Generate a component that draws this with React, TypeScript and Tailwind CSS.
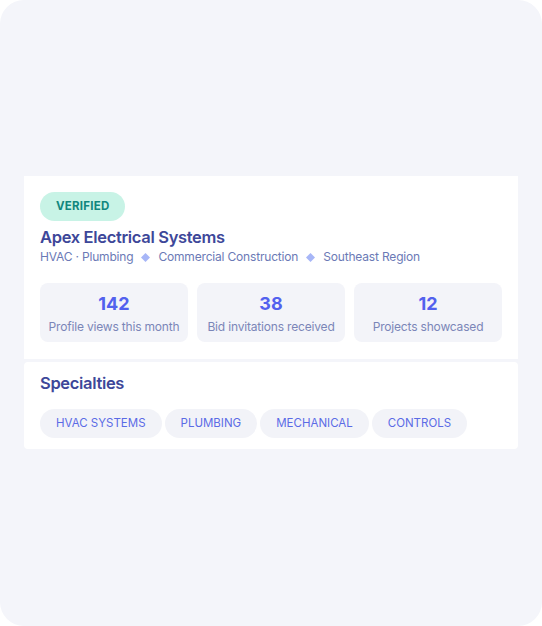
import React from 'react';

const stats = [
  { value: '142', label: 'Profile views this month' },
  { value: '38', label: 'Bid invitations received' },
  { value: '12', label: 'Projects showcased' },
];

const specialties = ['HVAC Systems', 'Plumbing', 'Mechanical', 'Controls'];

const Diamond = () => (
  <svg width="9" height="9" viewBox="0 0 10 10" className="mx-[8px] inline-block">
    <path d="M5 0 L10 5 L5 10 L0 5 Z" fill="#a7b6f7" />
  </svg>
);

export default function App() {
  return (
    <div className="min-h-screen bg-white font-['Inter',sans-serif]">
      <div className="h-[626px] w-[542px] rounded-[24px] bg-[#f4f5fa] flex flex-col justify-center px-[24px] pb-[1px]">
        <div className="bg-white px-[16px] pt-[16px] pb-[17px]">
          <span className="inline-flex h-[29px] items-center rounded-full bg-[#c8f3e6] px-[16px] text-[11.5px] font-bold tracking-[0.02em] text-[#12877e]">
            VERIFIED
          </span>
          <h2 className="mt-[5px] text-[16.5px] font-semibold leading-[22px] text-[#3d4799] tracking-[-0.02em]">
            Apex Electrical Systems
          </h2>
          <div className="mt-[0px] flex items-center text-[12px] leading-[18px] tracking-[-0.015em] text-[#6b7ab6]">
            <span>HVAC · Plumbing</span>
            <Diamond />
            <span>Commercial Construction</span>
            <Diamond />
            <span>Southeast Region</span>
          </div>
          <div className="mt-[17px] grid grid-cols-3 gap-[9px]">
            {stats.map((s) => (
              <div key={s.label} className="flex h-[59px] flex-col items-center rounded-[8px] bg-[#f3f4f9] pt-[12px]">
                <div className="text-[18px] font-bold leading-[18px] text-[#5261ee]">{s.value}</div>
                <div className="mt-[5px] text-[12px] leading-[18px] tracking-[-0.015em] text-[#7b86b8]">{s.label}</div>
              </div>
            ))}
          </div>
        </div>
        <div className="mt-[3px] rounded-[4px] bg-white px-[16px] pt-[10px] pb-[11px]">
          <h3 className="text-[16.5px] font-semibold leading-[22px] tracking-[-0.02em] text-[#3d4799]">Specialties</h3>
          <div className="mt-[15px] flex flex-wrap gap-[3px]">
            {specialties.map((t) => (
              <span key={t} className="inline-flex h-[29px] items-center rounded-full bg-[#f2f3f8] px-[16px] text-[11.5px] uppercase tracking-[0em] text-[#5b6be6]">
                {t}
              </span>
            ))}
          </div>
        </div>
      </div>
    </div>
  );
}
